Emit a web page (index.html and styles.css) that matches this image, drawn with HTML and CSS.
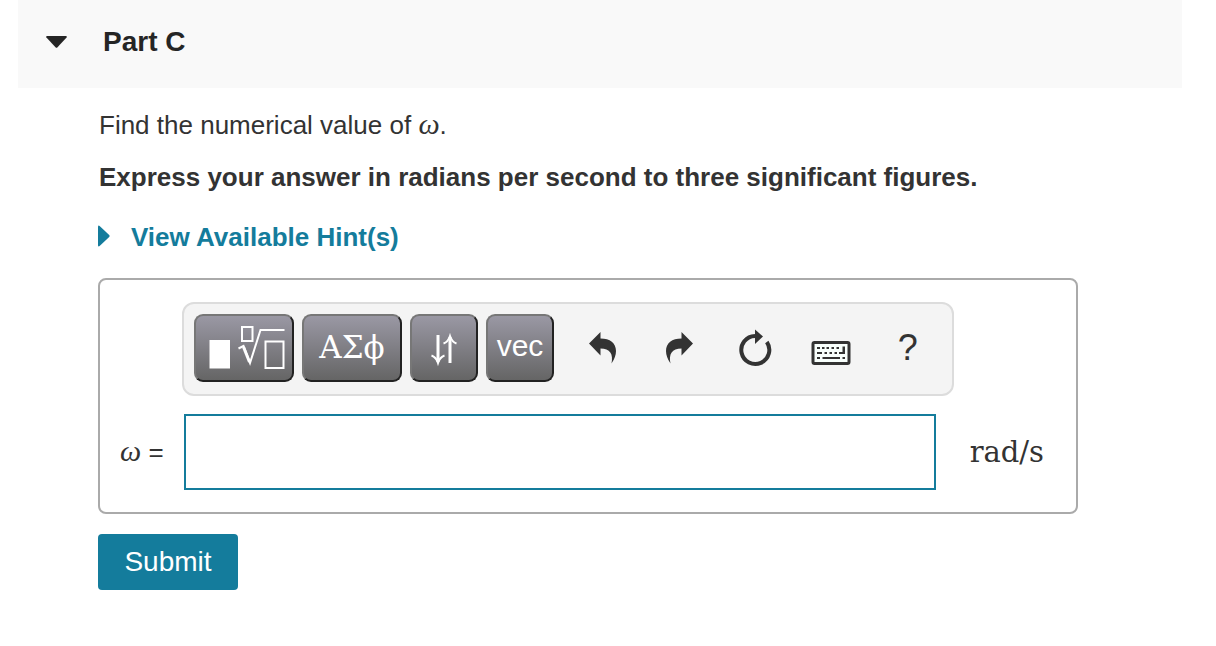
FILE: index.html
```html
<!DOCTYPE html>
<html lang="en">
<head>
<meta charset="utf-8">
<meta name="viewport" content="width=device-width, initial-scale=1">
<title>Part C</title>
<link rel="stylesheet" href="styles.css">
</head>
<body>
<main class="part">
  <header class="part-header">
    <button class="part-toggle" type="button" aria-expanded="true">
      <svg class="caret" width="22" height="12" viewBox="0 0 22 12" aria-hidden="true"><path d="M1 0h19q1.400.3.6 1.600L11.500 11.200q-1 1-2 0L.4 1.600Q-.4.3 1 0z"/></svg>
      <span>Part C</span>
    </button>
  </header>
  <form class="part-body">
    <p class="prompt">Find the numerical value of <i class="omega">ω</i>.</p>
    <p class="instruction">Express your answer in radians per second to three significant figures.</p>
    <a class="hints" href="#hints">
      <svg width="12" height="22" viewBox="0 0 12 22" aria-hidden="true"><path d="M0 .5Q.3-.9 1.600-.1L11.200 9q1 1 0 2L1.600 20.100Q.3 20.900 0 19.500z"/></svg>
      <span>View Available Hint(s)</span>
    </a>
    <section class="answer">
      <div class="toolbar" role="toolbar" aria-label="Equation tools">
        <button class="key key-wide" type="button" aria-label="Templates">
          <svg width="76" height="44" viewBox="0 0 76 44" aria-hidden="true">
            <path class="solid" d="M3.500 14h20.500v28.500H3.500z"/>
            <path class="line" d="M36 1h10.500v14H36zM59.500 15.500h18v26.500h-18z"/>
            <path class="line" d="M32.500 22.500l5-2.500 6.500 17L54.500 4h24"/>
            <path class="thick" d="M37.500 21l6 15"/>
          </svg>
        </button>
        <button class="key key-wide key-greek" type="button">ΑΣϕ</button>
        <button class="key" type="button" aria-label="Arrows">
          <svg width="28" height="32" viewBox="0 0 28 32" aria-hidden="true">
            <path class="stem" d="M8 3v27M20 31V5"/>
            <path class="line" d="M1.500 23.500Q6 25 8 31q2-6 6.500-7.500M13.500 11.500Q18 10 20 4q2 6 6.500 7.500"/>
          </svg>
        </button>
        <button class="key key-vec" type="button">vec</button>
        <div class="tools">
          <button class="tool" type="button" aria-label="Undo">
            <svg width="40" height="40" viewBox="0 0 40 40" aria-hidden="true"><path d="M7 16.500L18.500 5v6.500C28 11.500 34 16 34 24q0 6-4.500 12.500C31.500 27 28 21.500 18.500 21.500V28.500z"/></svg>
          </button>
          <button class="tool" type="button" aria-label="Redo">
            <svg width="40" height="40" viewBox="0 0 40 40" aria-hidden="true"><path d="M34 16.500L22.500 5v6.500C13 11.500 7 16 7 24q0 6 4.500 12.500C9.500 27 13 21.500 22.500 21.500V28.500z"/></svg>
          </button>
          <button class="tool" type="button" aria-label="Reset">
            <svg width="40" height="40" viewBox="0 0 40 40" aria-hidden="true"><path class="ring" d="M31.800 15A14 14 0 1 1 20 9"/><path d="M20 2.500l8 7-8 7.500z"/></svg>
          </button>
          <button class="tool" type="button" aria-label="Keyboard shortcuts">
            <svg width="40" height="40" viewBox="0 0 40 40" aria-hidden="true">
              <rect class="board" x="2" y="15.500" width="36" height="21" rx="1.500"/>
              <path class="keys" d="M6 21h3M11 21h2.500M15.500 21H18M20.500 21H23M25.500 21H28M6 26h5M13.500 26H16M18.500 26H21M23.500 26H26M28 26h6M6 31h3M11.500 31H29M31.500 31H34"/>
              <path d="M31.500 19.500H34V27h-2.500z"/>
            </svg>
          </button>
          <button class="tool tool-help" type="button" aria-label="Help">?</button>
        </div>
      </div>
      <div class="answer-row">
        <label class="answer-label" for="answer"><i class="omega">ω</i> =</label>
        <input class="answer-input" id="answer" type="text" autocomplete="off">
        <span class="unit">rad/s</span>
      </div>
    </section>
    <button class="submit" type="button">Submit</button>
  </form>
</main>
</body>
</html>
```
FILE: styles.css
```css
* {
  box-sizing: border-box;
}

body {
  margin: 0;
  background: #fff;
  color: #333;
  font: 26px/32px "Liberation Sans", Arial, sans-serif;
}

button {
  border: 0;
  padding: 0;
  background: none;
  color: inherit;
  font: inherit;
  cursor: pointer;
}

svg {
  display: block;
  flex: none;
  fill: currentColor;
  overflow: visible;
}

.part {
  margin: 0 34px 0 18px;
}

.part-header {
  padding: 24px 28px 28px;
  background: #f9f9f9;
}

.part-toggle {
  display: flex;
  align-items: center;
  gap: 35px;
  color: #252525;
  font-size: 28px;
  font-weight: bold;
  line-height: 36px;
}

.part-body {
  max-width: 1060px;
  padding: 21px 0 56px 80px;
}

.prompt,
.instruction {
  margin: 0 0 20px;
  padding-left: 1px;
}

.instruction {
  margin-bottom: 28px;
  font-weight: bold;
}

.omega {
  font-family: "Liberation Serif", "Times New Roman", serif;
  font-size: 30px;
  line-height: 24px;
}

.hints {
  display: flex;
  align-items: center;
  gap: 21px;
  width: fit-content;
  color: #147c9c;
  font-weight: bold;
  text-decoration: none;
}

.answer {
  margin-top: 25px;
  padding: 22px 32px 22px 20px;
  border: 2px solid #aaa;
  border-radius: 8px;
}

.toolbar {
  display: flex;
  align-items: center;
  gap: 8px;
  max-width: 772px;
  margin: 0 90px 18px 62px;
  padding: 10px 6px 12px 10px;
  border: 2px solid #dcdcdc;
  border-radius: 12px;
  background: #f4f4f4;
}

.key {
  display: flex;
  flex: none;
  align-items: center;
  justify-content: center;
  width: 68px;
  height: 68px;
  border: 2px solid;
  border-color: #777 #222 #222 #777;
  border-radius: 9px;
  background: linear-gradient(#9a98a4, #656565);
  color: #fff;
}

.key-wide {
  width: 100px;
}

.key-greek {
  padding-bottom: 2px;
  font-family: "DejaVu Serif", serif;
  font-size: 31px;
}

.key-vec {
  padding-bottom: 4px;
  font-size: 30px;
}

.solid {
  stroke: none;
}

.line,
.stem,
.thick {
  fill: none;
  stroke: currentColor;
  stroke-width: 2;
}

.stem,
.thick {
  stroke-width: 3;
}

.tools {
  display: flex;
  flex: 1;
  padding-left: 2px;
}

.tool {
  display: flex;
  flex: 1;
  align-items: center;
  justify-content: center;
  height: 68px;
  padding-bottom: 2px;
  color: #333;
}

.ring {
  fill: none;
  stroke: currentColor;
  stroke-width: 4;
}

.board {
  fill: #f8fffc;
  stroke: currentColor;
  stroke-width: 3;
}

.keys {
  fill: none;
  stroke: currentColor;
  stroke-width: 2;
}

.tool-help {
  padding-bottom: 0;
  font-size: 36px;
}

.answer-row {
  display: flex;
  align-items: center;
}

.answer-label {
  flex: none;
  width: 64px;
}

.answer-input {
  flex: 1;
  min-width: 0;
  height: 76px;
  padding: 0 12px;
  border: 2px solid #147c9c;
  border-radius: 0;
  background: #fff;
  color: inherit;
  font: inherit;
  outline: 0;
}

.unit {
  flex: none;
  margin-left: 34px;
  font-family: "DejaVu Serif", serif;
  font-size: 29px;
}

.submit {
  min-width: 140px;
  margin-top: 20px;
  padding: 12px 26px;
  border-radius: 4px;
  background: #147c9c;
  color: #fff;
  font-size: 28px;
}
```
